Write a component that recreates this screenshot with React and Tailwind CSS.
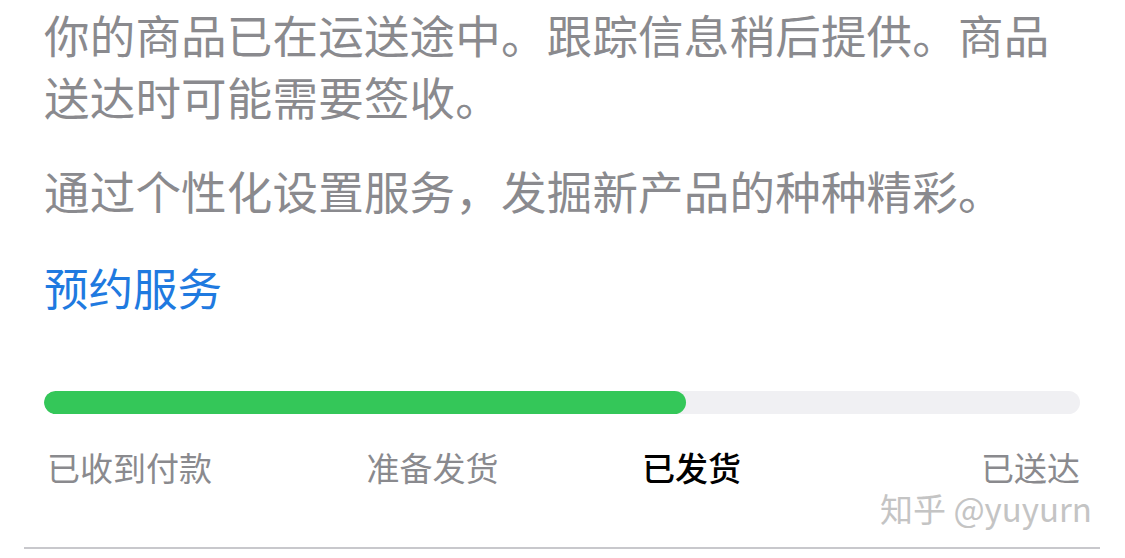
export default function App() {
  const font = { fontFamily: '"Noto Sans CJK SC", "Noto Sans", sans-serif' };
  return (
    <div className="relative w-[1125px] h-[558px] bg-white overflow-hidden" style={font}>
      <div className="pl-[44px] pr-[40px] pt-[3px]">
        <p className="text-[45.5px] leading-[62px] tracking-[0.2px] text-[#8a8a8e]">
          你的商品已在运送途中。跟踪信息稍后提供。商品送达时可能需要签收。
        </p>
        <p className="mt-[32px] text-[45.5px] leading-[62px] tracking-[0.2px] text-[#8a8a8e]">
          通过个性化设置服务，发掘新产品的种种精彩。
        </p>
        <div className="mt-[35px] text-[44.5px] leading-[62px] text-[#1f7ae0]">预约服务</div>
      </div>
      <div className="pl-[44px] pr-[45px] mt-[73px]">
        <div className="h-[23px] w-full rounded-full bg-[#f0f0f3] overflow-hidden">
          <div className="h-full w-[62%] rounded-full bg-[#34c759]" />
        </div>
        <div className="grid grid-cols-4 mt-[36px] text-[33px] leading-[34px]">
          <div className="text-left pl-[3px] text-[#8a8a8e]">已收到付款</div>
          <div className="text-center text-[#8a8a8e]">准备发货</div>
          <div className="text-center text-black font-medium">已发货</div>
          <div className="text-right text-[#8a8a8e]">已送达</div>
        </div>
      </div>
      <div className="absolute left-[880px] top-[491px] text-[33px] leading-[34px] text-[#c4c4c4] whitespace-nowrap">
        知乎 @yuyurn
      </div>
      <div className="absolute left-[24px] right-[25px] top-[547px] h-[2px] bg-[#c8c8cc]" />
    </div>
  );
}
